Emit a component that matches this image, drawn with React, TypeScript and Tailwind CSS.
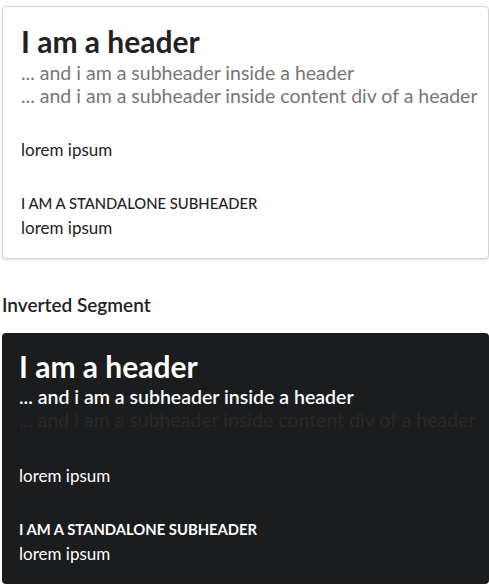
import React from 'react';

// A header block with a nested subheader and a content subheader
function HeaderBlock({ inverted }: { inverted?: boolean }) {
  return (
    <div>
      <h1
        className={`text-[30px] font-bold ${
          inverted ? 'leading-[38px] text-white' : 'leading-[39px] text-[#222]'
        }`}
      >
        I am a header
      </h1>
      <div className={`text-[19.5px] leading-[23px] ${inverted ? 'text-white font-semibold' : 'text-[#767676]'}`}>
        ... and i am a subheader inside a header
      </div>
      <div className={`whitespace-nowrap text-[19.5px] leading-[24px] ${inverted ? 'text-[#28292a]' : 'text-[#767676]'}`}>
        ... and i am a subheader inside content div of a header
      </div>
    </div>
  );
}

function Segment({ inverted }: { inverted?: boolean }) {
  const body = inverted ? 'text-white' : 'text-[#222]';
  return (
    <div
      className={
        inverted
          ? 'ml-[2px] rounded-[4px] bg-[#1b1c1d] px-[17px] pt-[14px] pb-[18px]'
          : 'ml-[2px] rounded-[4px] border border-[#d4d4d5] bg-white px-[18px] pt-[15px] pb-[18px] shadow-[0_1px_2px_rgba(34,36,38,0.15)]'
      }
    >
      <HeaderBlock inverted={inverted} />
      <p className={`${inverted ? 'mt-[32px]' : 'mt-[30px]'} text-[17px] leading-[24px] ${body}`}>lorem ipsum</p>
      <div
        className={`mt-[31px] text-[14.8px] uppercase leading-[20px] ${
          inverted ? 'font-bold text-white' : 'font-medium text-[#222]'
        }`}
      >
        I am a standalone subheader
      </div>
      <p className={`mt-[3px] text-[17px] leading-[24px] ${body}`}>lorem ipsum</p>
    </div>
  );
}

export default function App() {
  return (
    <div className="min-h-screen overflow-hidden bg-white pt-[6px] font-['Lato',sans-serif]">
      <Segment />
      <h3 className="mt-[34px] ml-[2px] text-[19px] font-semibold leading-[24px] text-[#222]">Inverted Segment</h3>
      <div className="mt-[16px]">
        <Segment inverted />
      </div>
    </div>
  );
}
